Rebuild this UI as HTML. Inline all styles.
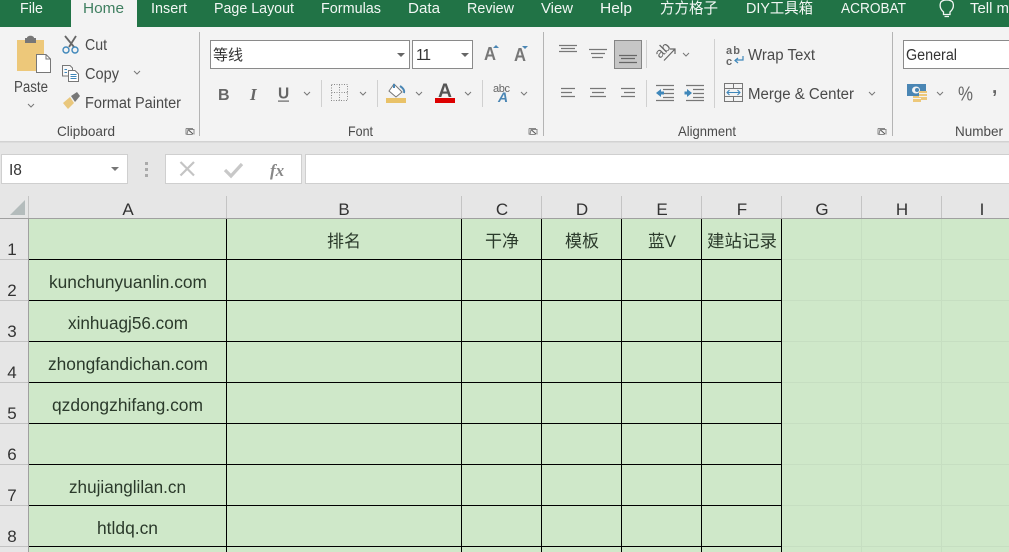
<!DOCTYPE html>
<html><head><meta charset="utf-8"><style>
html,body{margin:0;padding:0;width:1009px;height:552px;overflow:hidden;background:#cfe8c9}
svg{display:block}
text{font-family:"Liberation Sans","Noto Sans CJK SC",sans-serif}
.tab{font-size:15px;fill:#f2f7f4}
.rb{font-size:15.5px;fill:#4a4a4a}
.gl{font-size:14px;fill:#4a4a4a}
.hd{font-size:17px;fill:#333;text-anchor:middle}
.cell{font-size:17.5px;fill:#2b3a2b}
.cj{font-size:17px;fill:#2b3a2b}
.ic{fill:none;stroke:#777;stroke-width:1.15}
.ch{fill:none;stroke:#777;stroke-width:1}
</style></head><body>
<svg width="1009" height="552" viewBox="0 0 1009 552" xmlns="http://www.w3.org/2000/svg">
<!-- backgrounds -->
<rect width="1009" height="552" fill="#cfe8c9"/>
<rect width="1009" height="27" fill="#217346"/>
<rect x="0" y="27" width="1009" height="114" fill="#f3f3f3"/>
<rect x="71" y="0" width="66" height="27" fill="#f3f3f3"/>
<rect x="0" y="141" width="1009" height="1.5" fill="#d2d2d2"/>
<rect x="0" y="142.5" width="1009" height="53.5" fill="#e6e6e6"/>
<!-- tabs -->
<text class="tab" x="20" y="13" textLength="23" lengthAdjust="spacingAndGlyphs">File</text>
<text class="tab" x="83" y="13" textLength="41" lengthAdjust="spacingAndGlyphs" style="fill:#3f7f60">Home</text>
<text class="tab" x="151" y="13" textLength="36" lengthAdjust="spacingAndGlyphs">Insert</text>
<text class="tab" x="214" y="13" textLength="80" lengthAdjust="spacingAndGlyphs">Page Layout</text>
<text class="tab" x="321" y="13" textLength="60" lengthAdjust="spacingAndGlyphs">Formulas</text>
<text class="tab" x="408" y="13" textLength="32" lengthAdjust="spacingAndGlyphs">Data</text>
<text class="tab" x="467" y="13" textLength="47" lengthAdjust="spacingAndGlyphs">Review</text>
<text class="tab" x="541" y="13" textLength="32" lengthAdjust="spacingAndGlyphs">View</text>
<text class="tab" x="600" y="13" textLength="32" lengthAdjust="spacingAndGlyphs">Help</text>
<text class="tab" x="660" y="13" textLength="58" lengthAdjust="spacingAndGlyphs">方方格子</text>
<text class="tab" x="746" y="13" textLength="67" lengthAdjust="spacingAndGlyphs">DIY工具箱</text>
<text class="tab" x="841" y="13" textLength="65" lengthAdjust="spacingAndGlyphs">ACROBAT</text>
<text class="tab" x="970" y="13" textLength="39" lengthAdjust="spacingAndGlyphs">Tell m</text>
<path d="M943.500 12C940.500 9.500 939.500 6.500 940.500 3C941.500 -1 952 -1 953 3C954 6.500 953 9.500 950 12V14.500H943.500ZM944.500 16.500H949" fill="none" stroke="#f2f7f4" stroke-width="1.300"/>
<!-- separators -->
<g fill="#b4b4b4"><rect x="199" y="32" width="1" height="104"/><rect x="543" y="32" width="1" height="104"/><rect x="892" y="32" width="1" height="104"/></g>
<g fill="#d0d0d0"><rect x="321" y="80" width="1" height="27"/><rect x="377" y="80" width="1" height="27"/><rect x="482" y="80" width="1" height="27"/><rect x="646" y="40" width="1" height="28"/><rect x="646" y="80" width="1" height="27"/><rect x="714" y="39" width="1" height="69"/></g>
<!-- clipboard -->
<rect x="17" y="40" width="27" height="31" fill="#edc87a"/>
<path d="M25 41V38H27C27 35 34 35 34 38H36V41V43H25Z" fill="#777"/>
<path d="M36.500 54.500H46L50.500 59V72.500H36.500Z" fill="#fff" stroke="#777"/>
<path d="M46 54.500V59H50.500" fill="none" stroke="#777"/>
<text class="rb" x="14" y="92" textLength="34" lengthAdjust="spacingAndGlyphs">Paste</text>
<path class="ch" d="M28 104L31 107L34 104"/>
<path d="M65 36L74 47M76 36L69 47" fill="none" stroke="#666" stroke-width="1.800"/>
<circle cx="66" cy="50" r="3" fill="none" stroke="#3f87ba" stroke-width="1.400"/>
<circle cx="75" cy="50" r="3" fill="none" stroke="#3f87ba" stroke-width="1.400"/>
<text class="rb" x="85" y="50" textLength="22" lengthAdjust="spacingAndGlyphs">Cut</text>
<path d="M62.500 65.500H70L72.500 68V76H62.500Z" fill="#f8f8f8" stroke="#777"/>
<path d="M68.500 70.500H75L78.500 74V81.500H68.500Z" fill="#fff" stroke="#777"/>
<path d="M64.500 69.500H67M64.500 72.500H67M70.500 74.500H76.500M70.500 76.500H76.500M70.500 78.500H76.500" stroke="#3f87ba" fill="none"/>
<text class="rb" x="85" y="79" textLength="34" lengthAdjust="spacingAndGlyphs">Copy</text>
<path class="ch" d="M134 71L137 74L140 71"/>
<path d="M63 103L70 97L74 103L68 109L65 105.500Z" fill="#e9c77c"/>
<path d="M71 96L77 92L80 96L75 102Z" fill="#777"/>
<text class="rb" x="85" y="108" textLength="96" lengthAdjust="spacingAndGlyphs">Format Painter</text>
<text class="gl" x="57" y="136" textLength="58" lengthAdjust="spacingAndGlyphs">Clipboard</text>
<g id="launcher"><path d="M186 128.500H193M186 128.500V134.500M192.500 134.500H187L188 129.500H194V134.500" fill="none" stroke="#888"/><path d="M188.500 130L193 134" stroke="#555" fill="none"/></g>
<!-- font group -->
<rect x="210.500" y="40.500" width="199" height="28" fill="#fff" stroke="#8a8a8a"/>
<text x="213" y="60" font-size="15" fill="#333">等线</text>
<path d="M397 53H405L401 57Z" fill="#666"/>
<rect x="412.500" y="40.500" width="60" height="28" fill="#fff" stroke="#8a8a8a"/>
<text x="416" y="60" font-size="15.500" fill="#333" textLength="15">11</text>
<path d="M461 53H469L465 57Z" fill="#666"/>
<text x="484" y="60" font-size="18" font-weight="bold" fill="#777" textLength="12" lengthAdjust="spacingAndGlyphs">A</text>
<path d="M493 48L496 45L499 48Z" fill="#4a86b4"/>
<text x="514" y="61" font-size="18" font-weight="bold" fill="#777" textLength="12" lengthAdjust="spacingAndGlyphs">A</text>
<path d="M522 46H528L525 49Z" fill="#4a86b4"/>
<text x="218" y="100" font-size="16" font-weight="bold" fill="#666">B</text>
<text x="250" y="100" font-size="17" font-weight="bold" font-style="italic" fill="#666" style='font-family:"Liberation Serif"'>I</text>
<text x="278" y="98.500" font-size="15.500" font-weight="bold" fill="#666">U</text>
<rect x="278" y="100.500" width="11" height="1.200" fill="#666"/>
<path class="ch" d="M304 92L307 95L310 92"/>
<path d="M331.500 84.500H347.500V100.500H331.500ZM339.500 84.500V100.500M331.500 92.500H347.500" fill="none" stroke="#888" stroke-dasharray="1 1.500"/>
<path class="ch" d="M360 92L363 95L366 92"/>
<path d="M389 91L394 84L402 92L396 97Z" fill="#fff" stroke="#777"/>
<path d="M394 84V88M400 86C403 88 405 90 404 93" fill="none" stroke="#4a86b4" stroke-width="2"/>
<rect x="386" y="98" width="20" height="5" fill="#e9c268"/>
<path class="ch" d="M416 92L419 95L422 92"/>
<text x="438" y="97" font-size="19" font-weight="bold" fill="#555" textLength="14" lengthAdjust="spacingAndGlyphs">A</text>
<rect x="435" y="98" width="20" height="5" fill="#dd0000"/>
<path class="ch" d="M465 92L468 95L471 92"/>
<text x="493" y="92" font-size="11" fill="#666" textLength="17">abc</text>
<text x="498" y="102" font-size="14" font-weight="bold" font-style="italic" fill="#4a86b4">A</text>
<path class="ch" d="M521 92L524 95L527 92"/>
<text class="gl" x="348" y="136" textLength="25" lengthAdjust="spacingAndGlyphs">Font</text>
<use href="#launcher" x="343"/>
<!-- alignment -->
<path class="ic" d="M559 45.500H577M561 48.500H575M559 51.500H577"/>
<path class="ic" d="M589 49.500H607M591 53.500H605M592 57.500H603"/>
<rect x="614.500" y="40.500" width="27" height="28" fill="#c6c6c6" stroke="#858585"/>
<path class="ic" d="M619 55.500H637M621 58.500H635M619 62.500H637" style="stroke:#666"/>
<text x="0" y="0" font-size="14" fill="#666" transform="translate(660,59) rotate(-45)" textLength="16" lengthAdjust="spacingAndGlyphs">ab</text>
<path d="M664 60.500L675 49M670 49H675V54" fill="none" stroke="#666" stroke-width="1.200"/>
<path class="ch" d="M683 53L686 56L689 53"/>
<path class="ic" d="M561 88.500H575M561 92.500H572M561 96.500H575"/>
<path class="ic" d="M590 88.500H606M592 92.500H604M590 96.500H606"/>
<path class="ic" d="M621 88.500H635M624 92.500H635M621 96.500H635"/>
<path class="ic" d="M656 85.500H674M663 89.500H674M663 93.500H674M663 97.500H674M656 100.500H674"/>
<path d="M656 93L661 89V91.500H664V94.500H661V97Z" fill="#3f87ba"/>
<path class="ic" d="M686 85.500H704M693 89.500H704M693 93.500H704M693 97.500H704M686 100.500H704"/>
<path d="M692 93L687 89V91.500H684.500V94.500H687V97Z" fill="#3f87ba"/>
<text x="726" y="54" font-size="11" font-weight="bold" fill="#666" textLength="14">ab</text>
<text x="726" y="65" font-size="11" font-weight="bold" fill="#666">c</text>
<path d="M743 56V60H735M738 58L735 60.500L738 63" fill="none" stroke="#3f87ba" stroke-width="1.200"/>
<text class="rb" x="748" y="60" textLength="67" lengthAdjust="spacingAndGlyphs">Wrap Text</text>
<path d="M724.500 83.500H742.500V101.500H724.500ZM724.500 88.500H742.500M724.500 96.500H742.500M733.500 83.500V88.500M733.500 96.500V101.500" fill="none" stroke="#777"/>
<path d="M727 92.500H740M729.500 90L727 92.500L729.500 95M737.500 90L740 92.500L737.500 95" fill="none" stroke="#3f87ba" stroke-width="1.100"/>
<text class="rb" x="748" y="99" textLength="106" lengthAdjust="spacingAndGlyphs">Merge &amp; Center</text>
<path class="ch" d="M869 92L872 95L875 92"/>
<text class="gl" x="678" y="136" textLength="58" lengthAdjust="spacingAndGlyphs">Alignment</text>
<use href="#launcher" x="692"/>
<!-- number -->
<rect x="903.500" y="40.500" width="110" height="28" fill="#fff" stroke="#8a8a8a"/>
<text x="906" y="60" font-size="15.500" fill="#333" textLength="51" lengthAdjust="spacingAndGlyphs">General</text>
<rect x="907" y="84" width="19" height="12" fill="#4a86b4"/>
<ellipse cx="916" cy="90" rx="4" ry="3.500" fill="#f3f3f3"/>
<circle cx="917" cy="90" r="2" fill="#4a86b4"/>
<path d="M913 96H921V102H913ZM919 91H927V100H919Z" fill="#edc87a"/>
<path d="M913 98.500H921M919 93.500H927M919 96.500H927" stroke="#f3f3f3"/>
<path class="ch" d="M937 92L940 95L943 92"/>
<text x="958" y="100.500" font-size="20" fill="#666" textLength="15" lengthAdjust="spacingAndGlyphs">%</text>
<text x="992" y="93" font-size="19" font-weight="bold" fill="#666">,</text>
<text class="gl" x="955" y="136" textLength="48" lengthAdjust="spacingAndGlyphs">Number</text>
<!-- formula bar -->
<rect x="1.500" y="154.500" width="126" height="29" fill="#fff" stroke="#cfcfcf"/>
<text x="9" y="175" font-size="15.500" fill="#333">I8</text>
<path d="M111 167H119L115 171Z" fill="#777"/>
<g fill="#aaa"><rect x="145" y="162" width="3" height="3"/><rect x="145" y="168" width="3" height="3"/><rect x="145" y="174" width="3" height="3"/></g>
<rect x="165.500" y="154.500" width="136" height="29" fill="#fff" stroke="#cfcfcf"/>
<path d="M180.500 162L194 175.500M194 162L180.500 175.500" stroke="#c4c4c4" stroke-width="2.200" fill="none"/>
<path d="M225 170L231 176L242 164" stroke="#c8c8c8" stroke-width="3.200" fill="none"/>
<text x="270" y="176" font-size="17" font-style="italic" font-weight="bold" fill="#888" style='font-family:"Liberation Serif"'>fx</text>
<rect x="305.500" y="154.500" width="710" height="29" fill="#fff" stroke="#cfcfcf"/>
<!-- column headers -->
<rect x="0" y="196" width="1009" height="22" fill="#e6e6e6"/>
<rect x="0" y="218" width="28" height="334" fill="#e6e6e6"/>
<path d="M25 200V215H10Z" fill="#b4bcbc"/>
<g fill="#c4c4c4"><rect x="28" y="196" width="1" height="22"/><rect x="226" y="196" width="1" height="22"/><rect x="461" y="196" width="1" height="22"/><rect x="541" y="196" width="1" height="22"/><rect x="621" y="196" width="1" height="22"/><rect x="701" y="196" width="1" height="22"/><rect x="781" y="196" width="1" height="22"/><rect x="861" y="196" width="1" height="22"/><rect x="941" y="196" width="1" height="22"/></g>
<rect x="0" y="218" width="1009" height="1" fill="#a0a0a0"/>
<rect x="28" y="218" width="1" height="334" fill="#a0a0a0"/>
<text class="hd" x="128" y="215">A</text><text class="hd" x="344" y="215">B</text><text class="hd" x="502" y="215">C</text><text class="hd" x="582" y="215">D</text><text class="hd" x="662" y="215">E</text><text class="hd" x="742" y="215">F</text><text class="hd" x="822" y="215">G</text><text class="hd" x="902" y="215">H</text><text class="hd" x="982" y="215">I</text>
<text class="hd" x="12" y="255">1</text><text class="hd" x="12" y="296">2</text><text class="hd" x="12" y="337">3</text><text class="hd" x="12" y="378">4</text><text class="hd" x="12" y="419">5</text><text class="hd" x="12" y="460">6</text><text class="hd" x="12" y="501">7</text><text class="hd" x="12" y="542">8</text>
<!-- row header ticks -->
<g fill="#c2c2c2"><rect x="0" y="259" width="28" height="1"/><rect x="0" y="300" width="28" height="1"/><rect x="0" y="341" width="28" height="1"/><rect x="0" y="382" width="28" height="1"/><rect x="0" y="423" width="28" height="1"/><rect x="0" y="464" width="28" height="1"/><rect x="0" y="505" width="28" height="1"/><rect x="0" y="546" width="28" height="1"/></g>
<!-- light gridlines -->
<g fill="#c6dec1"><rect x="782" y="259" width="227" height="1"/><rect x="782" y="300" width="227" height="1"/><rect x="782" y="341" width="227" height="1"/><rect x="782" y="382" width="227" height="1"/><rect x="782" y="423" width="227" height="1"/><rect x="782" y="464" width="227" height="1"/><rect x="782" y="505" width="227" height="1"/><rect x="782" y="546" width="227" height="1"/><rect x="861" y="219" width="1" height="333"/><rect x="941" y="219" width="1" height="333"/></g>
<!-- black gridlines -->
<g fill="#000"><rect x="29" y="259" width="753" height="1"/><rect x="29" y="300" width="753" height="1"/><rect x="29" y="341" width="753" height="1"/><rect x="29" y="382" width="753" height="1"/><rect x="29" y="423" width="753" height="1"/><rect x="29" y="464" width="753" height="1"/><rect x="29" y="505" width="753" height="1"/><rect x="29" y="546" width="753" height="1"/>
<rect x="226" y="219" width="1" height="333"/><rect x="461" y="219" width="1" height="333"/><rect x="541" y="219" width="1" height="333"/><rect x="621" y="219" width="1" height="333"/><rect x="701" y="219" width="1" height="333"/><rect x="781" y="219" width="1" height="333"/></g>
<!-- cell text -->
<text class="cj" x="327" y="247">排名</text>
<text class="cj" x="485" y="247">干净</text>
<text class="cj" x="565" y="247">模板</text>
<text class="cj" x="648" y="247" textLength="28" lengthAdjust="spacingAndGlyphs">蓝V</text>
<text class="cj" x="707" y="247" textLength="70" lengthAdjust="spacingAndGlyphs">建站记录</text>
<text class="cell" x="49" y="288" textLength="158" lengthAdjust="spacingAndGlyphs">kunchunyuanlin.com</text>
<text class="cell" x="68" y="329" textLength="120" lengthAdjust="spacingAndGlyphs">xinhuagj56.com</text>
<text class="cell" x="48" y="370" textLength="160" lengthAdjust="spacingAndGlyphs">zhongfandichan.com</text>
<text class="cell" x="52" y="411" textLength="151" lengthAdjust="spacingAndGlyphs">qzdongzhifang.com</text>
<text class="cell" x="69" y="493" textLength="117" lengthAdjust="spacingAndGlyphs">zhujianglilan.cn</text>
<text class="cell" x="97" y="534" textLength="61" lengthAdjust="spacingAndGlyphs">htldq.cn</text>
</svg>
</body></html>
